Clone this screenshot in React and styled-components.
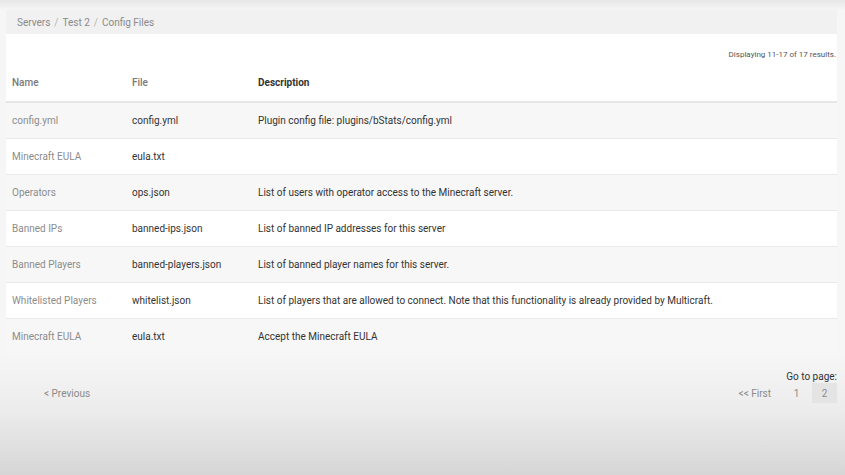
import React from "react";
import styled, { createGlobalStyle } from "styled-components";

const Global = createGlobalStyle`
  html, body { margin: 0; padding: 0; }
  body {
    width: 845px;
    height: 475px;
    overflow: hidden;
    font-family: Roboto, "Liberation Sans", sans-serif;
    background: linear-gradient(to bottom, #e6e6e6 0px, #f6f6f6 10px, #f6f6f6 355px, #ececec 410px, #d6d6d6 475px);
  }
`;

const Page = styled.div`
  padding: 10px 8px 0 6px;
  display: flex;
  flex-direction: column;
`;

const Breadcrumb = styled.div`
  height: 24px;
  background: #f1f1f1;
  display: flex;
  align-items: center;
  padding-left: 11px;
  font-size: 10px;
  color: #8a8a8a;
  gap: 4px;
`;

const Sep = styled.span`
  color: #b5b5b5;
`;

const Panel = styled.div`
  background: #ffffff;
  display: flex;
  flex-direction: column;
`;

const Summary = styled.div`
  height: 12px;
  line-height: 12px;
  padding-top: 15px;
  text-align: right;
  font-size: 8px;
  color: #555;
  padding-right: 1px;
`;

const Table = styled.table`
  width: 100%;
  border-collapse: collapse;
  table-layout: fixed;
  font-size: 10px;
`;

const Th = styled.th`
  text-align: left;
  font-weight: ${(p) => (p.$strong ? 700 : 500)};
  color: ${(p) => (p.$strong ? "#333" : "#7a7a7a")};
  line-height: 12px;
  padding: 16px 0 12px 6px;
  border-bottom: 2px solid #e6e6e6;
  width: ${(p) => p.$w || "auto"};
`;

const Tr = styled.tr`
  background: ${(p) => (p.$odd ? "#f7f7f7" : "#ffffff")};
  border-top: 1px solid #e9e9e9;
  &:first-child { border-top: none; }
`;

const Td = styled.td`
  height: 35px;
  padding: 0 0 0 6px;
  white-space: nowrap;
  color: ${(p) => (p.$muted ? "#8c8c8c" : "#333")};
`;

const Footer = styled.div`
  display: flex;
  justify-content: space-between;
  padding-top: 17px;
  font-size: 10px;
`;

const Prev = styled.a`
  color: #8a8a8a;
  margin-top: 17px;
  margin-left: 38px;
`;

const Pager = styled.div`
  display: flex;
  flex-direction: column;
  align-items: flex-end;
`;

const GoLabel = styled.div`
  color: #333;
  line-height: 12px;
`;

const Pages = styled.div`
  display: flex;
  align-items: center;
`;

const PageLink = styled.span`
  display: inline-flex;
  align-items: center;
  justify-content: center;
  height: 20px;
  min-width: ${(p) => (p.$wide ? "auto" : "25px")};
  margin-right: ${(p) => (p.$wide ? "13px" : p.$active ? "0" : "3px")};
  color: #8a8a8a;
  background: ${(p) => (p.$active ? "#e4e4e4" : "transparent")};
`;

const rows = [
  ["config.yml", "config.yml", "Plugin config file: plugins/bStats/config.yml"],
  ["Minecraft EULA", "eula.txt", ""],
  ["Operators", "ops.json", "List of users with operator access to the Minecraft server."],
  ["Banned IPs", "banned-ips.json", "List of banned IP addresses for this server"],
  ["Banned Players", "banned-players.json", "List of banned player names for this server."],
  ["Whitelisted Players", "whitelist.json", "List of players that are allowed to connect. Note that this functionality is already provided by Multicraft."],
  ["Minecraft EULA", "eula.txt", "Accept the Minecraft EULA"],
];

export default function App() {
  return (
    <>
      <Global />
      <Page>
        <Breadcrumb>
          <span>Servers</span><Sep>/</Sep><span>Test 2</span><Sep>/</Sep><span>Config Files</span>
        </Breadcrumb>
        <Panel>
          <Summary>Displaying 11-17 of 17 results.</Summary>
          <Table>
            <thead>
              <tr>
                <Th $w="114px">Name</Th>
                <Th $w="120px">File</Th>
                <Th $strong>Description</Th>
              </tr>
            </thead>
            <tbody>
              {rows.map((r, i) => (
                <Tr key={i} $odd={i % 2 === 0}>
                  <Td $muted>{r[0]}</Td>
                  <Td>{r[1]}</Td>
                  <Td>{r[2]}</Td>
                </Tr>
              ))}
            </tbody>
          </Table>
        </Panel>
        <Footer>
          <Prev>&lt; Previous</Prev>
          <Pager>
            <GoLabel>Go to page:</GoLabel>
            <Pages>
              <PageLink $wide>&lt;&lt; First</PageLink>
              <PageLink>1</PageLink>
              <PageLink $active>2</PageLink>
            </Pages>
          </Pager>
        </Footer>
      </Page>
    </>
  );
}
